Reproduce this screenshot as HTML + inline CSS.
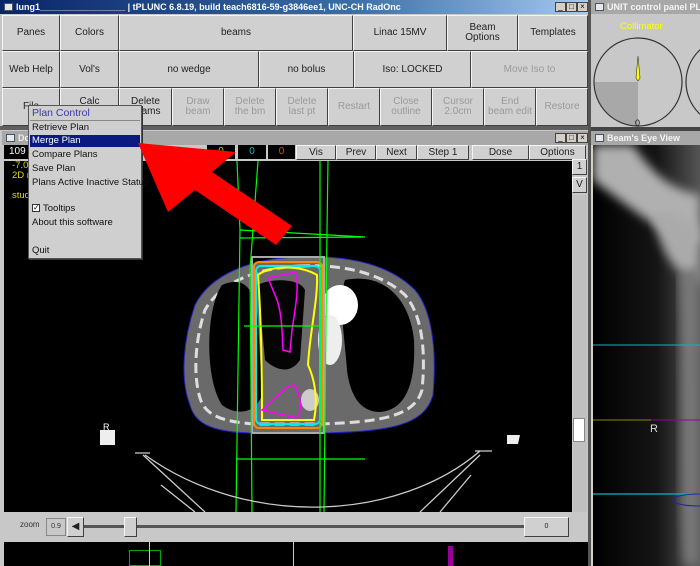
<!DOCTYPE html>
<html><head><meta charset="utf-8"><style>
*{margin:0;padding:0;box-sizing:border-box}
body{width:700px;height:566px;overflow:hidden;background:#d4d0c8;font-family:"Liberation Sans",sans-serif;position:relative}
.a{position:absolute}
.b{position:absolute;background:#d0d0d0;border:1px solid;border-color:#f4f4f4 #404040 #404040 #f4f4f4;font-size:10px;color:#222;display:flex;align-items:center;justify-content:center;text-align:center;line-height:10px}
.d{color:#9a9a9a}
.tb{position:absolute;height:14px;font-size:9px;font-weight:bold;color:#fff;padding-left:16px;line-height:14px;white-space:nowrap;overflow:hidden}
.ic{position:absolute;left:4px;top:3px;width:9px;height:8px;background:#e8e8e8;border:1px solid #456}
.ctl{position:absolute;width:11px;height:10px;background:#d4d0c8;border:1px solid #444;font-size:8px;line-height:8px;text-align:center;color:#000;top:2px}
.mi{position:absolute;left:3px;font-size:9.5px;color:#111;white-space:nowrap}
</style></head><body>
<div class="tb" style="left:0;top:0;width:588px;background:linear-gradient(90deg,#0a246a,#3a6ea5 60%,#a6caf0)">lung1_________________ | tPLUNC 6.8.19, build teach6816-59-g3846ee1, UNC-CH RadOnc<div class="ic"></div></div>
<div class="ctl" style="left:555px;top:2px">_</div><div class="ctl" style="left:566px;top:2px">□</div><div class="ctl" style="left:577px;top:2px">×</div>
<div class="a" style="left:0;top:14px;width:590px;height:114px;background:#c8c8c8"></div>
<div class="b" style="left:2px;top:15px;width:58px;height:36px">Panes</div>
<div class="b" style="left:60px;top:15px;width:59px;height:36px">Colors</div>
<div class="b" style="left:119px;top:15px;width:234px;height:36px">beams</div>
<div class="b" style="left:353px;top:15px;width:94px;height:36px">Linac 15MV</div>
<div class="b" style="left:447px;top:15px;width:71px;height:36px">Beam<br>Options</div>
<div class="b" style="left:518px;top:15px;width:70px;height:36px">Templates</div>
<div class="b" style="left:2px;top:51px;width:58px;height:37px">Web Help</div>
<div class="b" style="left:60px;top:51px;width:59px;height:37px">Vol's</div>
<div class="b" style="left:119px;top:51px;width:140px;height:37px">no wedge</div>
<div class="b" style="left:259px;top:51px;width:95px;height:37px">no bolus</div>
<div class="b" style="left:354px;top:51px;width:117px;height:37px">Iso: LOCKED</div>
<div class="b d" style="left:471px;top:51px;width:117px;height:37px">Move Iso to</div>
<div class="b" style="left:2px;top:88px;width:58px;height:38px">File</div>
<div class="b" style="left:60px;top:88px;width:59px;height:38px">Calc<br>Dose</div>
<div class="b" style="left:119px;top:88px;width:53px;height:38px">Delete<br>beams</div>
<div class="b d" style="left:172px;top:88px;width:52px;height:38px">Draw<br>beam</div>
<div class="b d" style="left:224px;top:88px;width:52px;height:38px">Delete<br>the bm</div>
<div class="b d" style="left:276px;top:88px;width:52px;height:38px">Delete<br>last pt</div>
<div class="b d" style="left:328px;top:88px;width:52px;height:38px">Restart</div>
<div class="b d" style="left:380px;top:88px;width:52px;height:38px">Close<br>outline</div>
<div class="b d" style="left:432px;top:88px;width:52px;height:38px">Cursor<br>2.0cm</div>
<div class="b d" style="left:484px;top:88px;width:52px;height:38px">End<br>beam edit</div>
<div class="b d" style="left:536px;top:88px;width:52px;height:38px">Restore</div>
<div class="a" style="left:0;top:126px;width:590px;height:4px;background:#606060"></div>
<div class="a" style="left:0;top:130px;width:590px;height:436px;background:#c8c8c8"></div>
<div class="tb" style="left:2px;top:131px;width:586px;background:#a8a8a8;color:#eee">Dose<div class="ic"></div></div>
<div class="ctl" style="left:555px;top:133px">_</div><div class="ctl" style="left:566px;top:133px">□</div><div class="ctl" style="left:577px;top:133px">×</div>
<div class="a" style="left:4px;top:145px;width:30px;height:14px;background:#000;color:#fff;font-size:10px;padding-left:5px;line-height:14px">109</div>
<div class="a" style="left:207px;top:145px;width:28px;height:14px;background:#000;color:#cc0;font-size:10px;text-align:center;line-height:14px">0</div>
<div class="a" style="left:238px;top:145px;width:28px;height:14px;background:#000;color:#1bc;font-size:10px;text-align:center;line-height:14px">0</div>
<div class="a" style="left:268px;top:145px;width:27px;height:14px;background:#000;color:#c50;font-size:10px;text-align:center;line-height:14px">0</div>
<div class="b" style="left:296px;top:145px;width:40px;height:15px">Vis</div>
<div class="b" style="left:336px;top:145px;width:40px;height:15px">Prev</div>
<div class="b" style="left:376px;top:145px;width:41px;height:15px">Next</div>
<div class="b" style="left:417px;top:145px;width:52px;height:15px">Step 1</div>
<div class="b" style="left:472px;top:145px;width:57px;height:15px">Dose</div>
<div class="b" style="left:529px;top:145px;width:57px;height:15px">Options</div>
<div class="a" style="left:4px;top:161px;width:568px;height:351px;background:#000;overflow:hidden">
<div class="a" style="left:8px;top:0;color:#dd0;font-size:9.5px;line-height:10px">-7.0<br>2D m<br><br>stude</div>
<svg width="568" height="351" viewBox="4 161 568 351" style="position:absolute;left:0;top:0">
<path d="M300,257 C350,255 390,265 415,290 C432,310 437,350 433,395 C425,425 390,432 320,433 L250,433 C215,432 195,425 190,405 C180,380 183,340 195,305 C210,275 250,258 300,257Z" fill="#6a6a6a" stroke="#22c" stroke-width="1"/>
<path d="M300,266 C340,264 380,272 405,295 C422,315 426,350 422,390 C415,415 385,422 320,424 L255,424 C222,422 205,415 200,398 C193,375 195,340 205,310 C220,283 255,268 300,266Z" fill="none" stroke="#ddd" stroke-width="3" stroke-dasharray="10 5"/>
<path d="M222,285 C245,275 255,290 258,320 L262,395 C255,415 235,415 222,405 C205,380 205,310 222,285Z" fill="#000"/>
<path d="M345,280 C385,272 410,300 414,340 C416,385 405,410 380,412 C360,412 350,395 347,370 C345,340 338,300 345,280Z" fill="#000"/>
<path d="M258,285 C270,278 300,278 305,290 L300,360 C290,375 275,370 265,360Z" fill="#050505"/>
<ellipse cx="340" cy="305" rx="18" ry="20" fill="#fff"/>
<ellipse cx="330" cy="340" rx="12" ry="25" fill="#eee"/>
<ellipse cx="310" cy="400" rx="9" ry="11" fill="#ccc"/>
<rect x="252" y="257" width="72" height="176" fill="none" stroke="#aaa" stroke-width="2"/>
<rect x="254" y="262" width="68" height="166" rx="5" fill="none" stroke="#f80" stroke-width="2"/>
<rect x="256" y="266" width="64" height="158" rx="5" fill="none" stroke="#0ee" stroke-width="2"/>
<path d="M258,275 C270,265 300,265 317,275 C318,300 310,330 308,365 C315,380 318,400 314,420 L262,420 C262,390 262,330 258,275Z" fill="none" stroke="#ff0" stroke-width="2"/>
<path d="M268,278 L295,272 C300,285 295,310 292,330 L290,352 L283,350 C282,330 282,310 275,295Z M262,410 C275,400 285,385 295,385 C300,395 303,410 297,418 Z" fill="none" stroke="#f0f" stroke-width="1.5"/>
<g stroke="#0f0" stroke-width="1.2" fill="none">
<path d="M237,161 L240,230 L236,512 M258,161 L250,270 L252,512 M320,161 L320,512 M328,161 L327,230 L324,512 M240,230 L365,237 L240,238 M236,459 L365,459 M244,326 L320,326"/>
</g>
<polygon points="100,430 115,430 115,445 100,445" fill="#eee"/>
<text x="103" y="430" fill="#fff" font-size="9" font-family="Liberation Sans">R</text>
<polygon points="507,435 520,435 518,444 507,444" fill="#eee"/>
<path d="M135,453 L150,453 M143,455 L205,512 M145,455 C250,530 400,520 480,451 M475,451 L492,451 M480,455 L420,512 M161,485 L195,512 M471,475 L440,512" stroke="#ccc" stroke-width="1.3" fill="none"/>
</svg>
</div>
<div class="b" style="left:572px;top:159px;width:15px;height:16px">1</div>
<div class="b" style="left:572px;top:177px;width:15px;height:16px">V</div>
<div class="a" style="left:573px;top:195px;width:14px;height:317px;background:#c0c0c0"></div>
<div class="a" style="left:573px;top:418px;width:12px;height:24px;background:#fff;border:1px solid #888"></div>
<div class="a" style="left:20px;top:520px;font-size:8px;color:#333">zoom</div>
<div class="a" style="left:46px;top:518px;width:20px;height:18px;border:1px solid #888;font-size:7px;line-height:16px;text-align:center;color:#333">0.9</div>
<div class="b" style="left:67px;top:517px;width:17px;height:20px">◀</div>
<div class="a" style="left:84px;top:525px;width:440px;height:3px;background:#555"></div>
<div class="b" style="left:124px;top:517px;width:13px;height:20px"></div>
<div class="b" style="left:524px;top:517px;width:45px;height:20px;font-size:7px">0</div>
<div class="a" style="left:4px;top:542px;width:584px;height:24px;background:#000">
<div class="a" style="left:125px;top:8px;width:32px;height:16px;border:1px solid #0a0"></div>
<div class="a" style="left:145px;top:0;width:1px;height:24px;background:#ccc"></div>
<div class="a" style="left:289px;top:0;width:1px;height:24px;background:#ccc"></div>
<div class="a" style="left:444px;top:4px;width:5px;height:20px;background:#909"></div>
</div>
<div class="a" style="left:28px;top:105px;width:114px;height:154px;background:#cfcfcf;border:1px solid #555;box-shadow:1px 1px 0 #333">
<div class="mi" style="top:1px;color:#3a3aa8;font-size:10.5px">Plan Control</div>
<div class="a" style="left:1px;top:14px;width:110px;height:1px;background:#888"></div>
<div class="mi" style="top:16px">Retrieve Plan</div>
<div class="a" style="left:1px;top:29px;width:110px;height:12px;background:#0a1a80"></div>
<div class="mi" style="top:29px;color:#fff">Merge Plan</div>
<div class="mi" style="top:43px">Compare Plans</div>
<div class="mi" style="top:57px">Save Plan</div>
<div class="mi" style="top:71px">Plans Active Inactive Status</div>
<div class="a" style="left:3px;top:98px;width:8px;height:8px;background:#fff;border:1px solid #333;font-size:8px;line-height:6px">✓</div>
<div class="mi" style="top:97px;left:14px">Tooltips</div>
<div class="mi" style="top:111px">About this software</div>
<div class="mi" style="top:139px">Quit</div>
</div>
<svg class="a" style="left:0;top:0" width="700" height="566"><polygon points="138,143 236,152 212,172 292,226 276,245 195,190 168,212" fill="#f00"/></svg>
<div class="a" style="left:588px;top:0;width:3px;height:566px;background:#555"></div>
<div class="tb" style="left:591px;top:0;width:109px;background:#a8a8a8;color:#f4f4f4">UNIT control panel PLanUNC<div class="ic"></div></div>
<div class="a" style="left:591px;top:14px;width:109px;height:113px;background:#c8c8c8;overflow:hidden">
<div class="a" style="left:29px;top:7px;color:#ff0;font-size:9.5px">Collimator</div>
<svg width="109" height="113" style="position:absolute;left:0;top:0">
<path d="M47,68 L3,68 A44,44 0 0,0 47,112Z" fill="#a8a8a8"/>
<circle cx="47" cy="68" r="44" fill="none" stroke="#333" stroke-width="1.2"/>
<circle cx="139" cy="68" r="44" fill="none" stroke="#333" stroke-width="1.2"/>
<path d="M47,42 L49,64 L47,67 L45,64Z" fill="#ff0" stroke="#333" stroke-width=".6"/>
<text x="44" y="112" font-size="9" fill="#111" font-family="Liberation Sans">0</text>
</svg>
</div>
<div class="a" style="left:591px;top:127px;width:109px;height:4px;background:#444"></div>
<div class="tb" style="left:591px;top:131px;width:109px;background:#a8a8a8;color:#f4f4f4">Beam's Eye View<div class="ic"></div></div>
<div class="a" style="left:593px;top:145px;width:107px;height:421px;background:#000;overflow:hidden">
<svg width="107" height="421" style="position:absolute;left:0;top:0">
<defs><linearGradient id="g1" x1="0" x2="1"><stop offset="0" stop-color="#000"/><stop offset="0.6" stop-color="#151515"/><stop offset="1" stop-color="#555"/></linearGradient><filter id="bl"><feGaussianBlur stdDeviation="5"/></filter></defs>
<rect width="107" height="421" fill="url(#g1)"/>
<path d="M0,0 L40,0 C60,30 80,45 107,50 L107,100 C80,95 60,80 0,35Z" fill="#b0b0b0" filter="url(#bl)"/>
<path d="M60,70 C80,60 107,80 107,90 L107,140 C90,130 70,120 60,70Z" fill="#aaa" filter="url(#bl)"/>
<path d="M85,130 L107,120 L107,421 L90,421 C85,350 90,250 85,130Z" fill="#777" filter="url(#bl)"/>
<line x1="0" y1="200" x2="107" y2="200" stroke="#0bb" stroke-width="1"/>
<line x1="0" y1="349" x2="107" y2="349" stroke="#0bb" stroke-width="1.2"/>
<line x1="0" y1="275" x2="58" y2="275" stroke="#880" stroke-width="1"/>
<line x1="58" y1="275" x2="107" y2="275" stroke="#909" stroke-width="1"/>
<ellipse cx="105" cy="355" rx="25" ry="6" fill="none" stroke="#22a"/>
<text x="57" y="287" fill="#ddd" font-size="11" font-family="Liberation Sans">R</text>
</svg>
</div>
</body></html>
